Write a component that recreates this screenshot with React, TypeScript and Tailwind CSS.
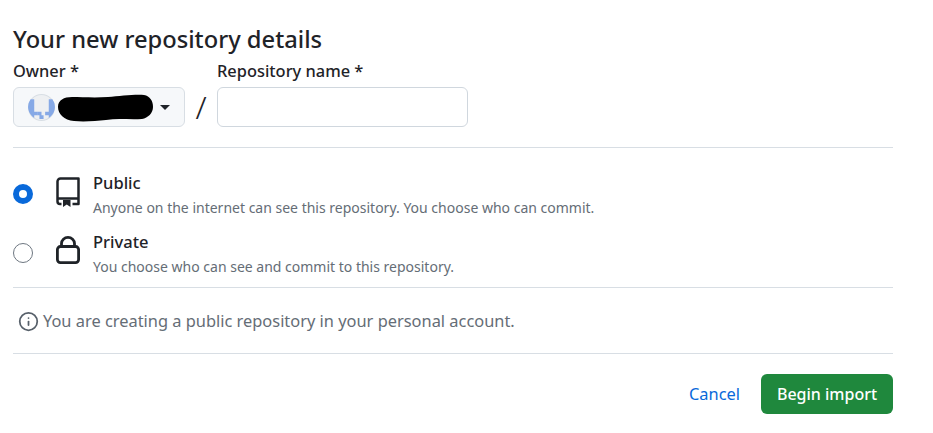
import { Info } from "lucide-react";

const font = { fontFamily: '"Noto Sans", "Open Sans", sans-serif' };

const RepoIcon = () => (
  <svg viewBox="0 0 24 30" className="h-[30px] w-6" fill="none" stroke="#1f2328" strokeWidth="2.500" strokeLinejoin="round">
    <path d="M1.500 24.500V4.500a3 3 0 0 1 3-3h18v25.500h-6M1.500 24.500a2.500 2.500 0 0 0 2.500 2.500h1.500M2.500 21.500h20" />
    <path d="M7 23h7.500v7l-3.750-2.500L7 30z" fill="#1f2328" stroke="none" />
  </svg>
);

const LockIcon = () => (
  <svg viewBox="0 0 24 28" className="mb-[2px] h-[28px] w-6" fill="none" stroke="#1f2328" strokeWidth="2.800" strokeLinejoin="round">
    <rect x="1.400" y="10.500" width="21.200" height="16.100" rx="3" />
    <path d="M5.500 10.500V7.500a6.500 6.100 0 0 1 13 0v3" />
  </svg>
);

const Avatar = () => (
  <svg viewBox="0 0 26 26" className="h-[27px] w-[27px]">
    <circle cx="13" cy="13" r="12.500" fill="#eef0f2" stroke="#d8dee4" />
    <path d="M2.500 5h3.500v12h3.500v3.500H6V23A12.500 12.500 0 0 1 2.500 5zM23.500 5H20v12h-3.500v3.500H20V23A12.500 12.500 0 0 0 23.500 5z" fill="#86a9e6" />
    <path d="M11 20.500h4V24h-4zM9.500 17H13v3.500H9.500z" fill="#86a9e6" />
  </svg>
);

type RepoOptionProps = {
  label: string;
  description: string;
  checked: boolean;
  icon: React.ReactNode;
};

const RepoOption = ({ label, description, checked, icon }: RepoOptionProps) => (
  <div className="flex h-[59px] items-center">
    {checked ? (
      <span className="mt-[-2px] h-5 w-5 rounded-full border-[6px] border-[#0969da] bg-white" />
    ) : (
      <span className="mt-[-2px] h-5 w-5 rounded-full border border-[#6e7781] bg-white" />
    )}
    <span className="ml-[23px] mt-[-6px] flex w-6 justify-center">{icon}</span>
    <div className="ml-[13px] mt-[1px]">
      <div className="text-[16.500px] font-medium leading-[24px] text-[#1f2328]">{label}</div>
      <div className="mt-[1px] text-[14px] leading-[24px] text-[#656d76]">{description}</div>
    </div>
  </div>
);

export default function App() {
  return (
    <div className="h-[433px] w-[933px] overflow-hidden bg-white pl-[13px] pt-[23px]" style={font}>
      <div className="w-[880px]">
        <h2 className="text-[23.700px] font-medium leading-[32px] text-[#1f2328]">Your new repository details</h2>

        <div className="mt-[4px] flex items-end">
          <div className="w-[172px]">
            <div className="text-[16.400px] font-medium leading-[24px] text-[#1f2328]">Owner *</div>
            <div className="mt-[4px] flex h-10 items-center rounded-md border border-[#d8dee4] bg-[#f6f8fa] pl-[14px]">
              <Avatar />
              <svg viewBox="0 0 96 30" className="ml-[2px] h-[30px] w-[96px]">
                <path d="M1 15C1 8 7 5 15 5c10 0 22 1 36 0 12-1 28-3 36-2 6 1 9 6 9 12s-5 11-11 12c-12 1-24-1-36 1-10 1-22 2-32 1C7 28 1 22 1 15z" fill="#000" />
              </svg>
              <span className="ml-[7px] h-0 w-0 border-x-[5px] border-t-[5px] border-x-transparent border-t-[#1f2328]" />
            </div>
          </div>
          <div className="flex h-10 w-[32px] items-center justify-center text-[32px] font-light text-[#1f2328]">/</div>
          <div className="w-[251px]">
            <div className="text-[16.400px] font-medium leading-[24px] text-[#1f2328]">Repository name *</div>
            <input className="mt-[4px] block h-10 w-full rounded-md border border-[#d0d7de] bg-white" />
          </div>
        </div>

        <div className="mt-[20px] border-t border-[#d8dee4]" />

        <div className="pt-[17px]">
          <RepoOption
            label="Public"
            description="Anyone on the internet can see this repository. You choose who can commit."
            checked
            icon={<RepoIcon />}
          />
          <RepoOption
            label="Private"
            description="You choose who can see and commit to this repository."
            checked={false}
            icon={<LockIcon />}
          />
        </div>

        <div className="mt-[4px] border-t border-[#d8dee4]" />

        <div className="flex h-[65px] items-center pl-[5px] pt-[2px] text-[#656d76]">
          <Info className="h-[21px] w-[21px] text-[#57606a]" strokeWidth={2} />
          <span className="ml-[4px] text-[16.400px]">You are creating a public repository in your personal account.</span>
        </div>

        <div className="border-t border-[#d8dee4]" />

        <div className="mt-[20px] flex items-center justify-end">
          <a className="text-[16.400px] text-[#0969da]">Cancel</a>
          <button className="ml-[21px] h-10 w-[132px] rounded-md bg-[#1f883d] text-[16px] font-medium text-white">
            Begin import
          </button>
        </div>
      </div>
    </div>
  );
}
